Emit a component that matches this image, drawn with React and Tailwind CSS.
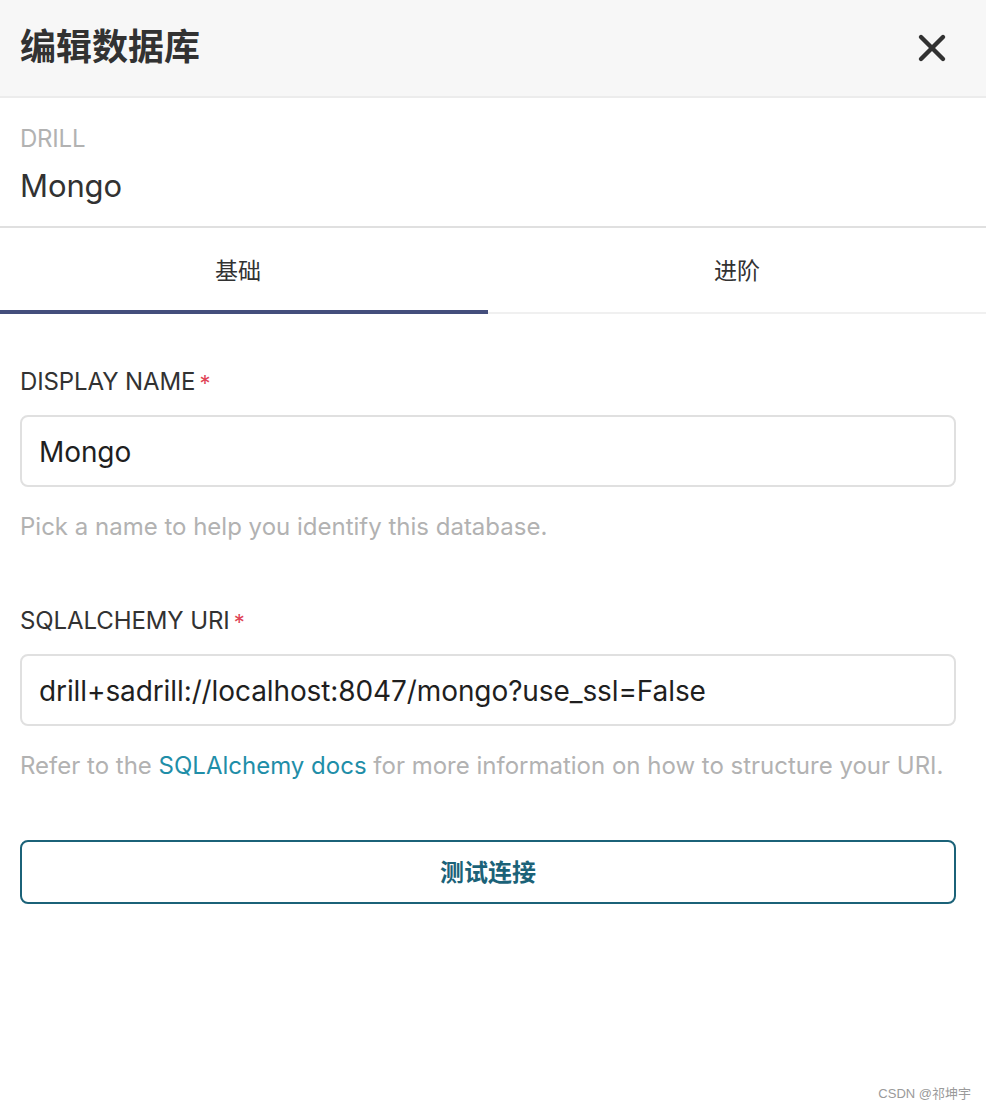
import { X } from 'lucide-react';

const font = { fontFamily: 'Inter, "Noto Sans CJK SC", sans-serif' };

const Field = ({ label, value, children }) => (
  <div>
    <div className="h-[34px] flex items-center text-[24px] text-[#323232] tracking-[-0.1px] pt-[2px]">
      {label}
      <span className="text-[#e04355] ml-[4px] text-[22px] mt-[2px]">*</span>
    </div>
    <div className="mt-[17px] h-[72px] border-2 border-[#e0e0e0] rounded-[8px] flex items-center px-[17px] pt-[2px] text-[28px] text-[#1f1f1f] tracking-[-0.1px]">
      {value}
    </div>
    <div className="h-[34px] mt-[22px] flex items-center pt-[2px] text-[24px] text-[#b2b2b2] whitespace-nowrap">
      {children}
    </div>
  </div>
);

export default function App() {
  return (
    <div className="w-[986px] h-[1110px] bg-white relative" style={font}>
      {/* Header */}
      <div className="h-[98px] bg-[#f7f7f7] border-b-2 border-[#ececec] flex items-center justify-between pl-[20px] pr-[32px]">
        <h1 className="text-[36px] font-bold text-[#323232] -mt-[2px]">编辑数据库</h1>
        <X className="w-[44px] h-[44px] text-[#323232]" strokeWidth={2.4} />
      </div>

      {/* Database type */}
      <div className="h-[130px] border-b-2 border-[#e0e0e0] px-[20px] pt-[26px]">
        <div className="text-[24px] text-[#b2b2b2] leading-[30px] tracking-[-0.2px]">DRILL</div>
        <div className="text-[31px] text-[#323232] leading-[36px] mt-[14px] tracking-[-0.1px]">Mongo</div>
      </div>

      {/* Tabs */}
      <div className="flex h-[86px] border-b-2 border-[#f0f0f0]">
        <div className="w-[488px] flex items-center justify-center text-[23px] text-[#323232] border-b-4 border-[#444e7c] -mb-[2px] pt-[4px] pr-[12px]">
          基础
        </div>
        <div className="flex-1 flex items-center justify-center text-[23px] text-[#323232] pt-[2px]">
          进阶
        </div>
      </div>

      {/* Form */}
      <div className="pl-[20px] pr-[30px] pt-[50px]">
        <Field label="DISPLAY NAME" value="Mongo">
          Pick a name to help you identify this database.
        </Field>
        <div className="mt-[60px]">
          <Field label="SQLALCHEMY URI" value="drill+sadrill://localhost:8047/mongo?use_ssl=False">
            <span>
              Refer to the <span className="text-[#1f8ea8]">SQLAlchemy docs</span> for more information on how to structure your URI.
            </span>
          </Field>
        </div>
        <button className="mt-[58px] w-full h-[64px] border-2 border-[#1b6278] rounded-[8px] pt-[2px] text-[24px] font-bold text-[#1b6278] flex items-center justify-center">
          测试连接
        </button>
      </div>

      <div className="absolute right-[15px] bottom-[7px] text-[13px] text-[#9a9a9a]" style={{ fontFamily: '"Liberation Sans", "Noto Sans CJK SC", sans-serif' }}>
        CSDN @祁坤宇
      </div>
    </div>
  );
}
